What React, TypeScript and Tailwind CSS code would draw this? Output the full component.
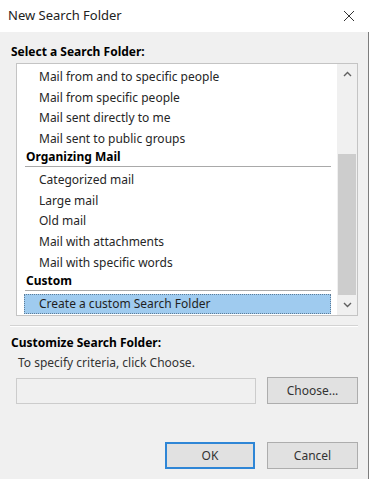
import React from 'react';

type Row = { kind: 'item' | 'header'; label: string; selected?: boolean };

const rows: Row[] = [
  { kind: 'item', label: 'Mail from and to specific people' },
  { kind: 'item', label: 'Mail from specific people' },
  { kind: 'item', label: 'Mail sent directly to me' },
  { kind: 'item', label: 'Mail sent to public groups' },
  { kind: 'header', label: 'Organizing Mail' },
  { kind: 'item', label: 'Categorized mail' },
  { kind: 'item', label: 'Large mail' },
  { kind: 'item', label: 'Old mail' },
  { kind: 'item', label: 'Mail with attachments' },
  { kind: 'item', label: 'Mail with specific words' },
  { kind: 'header', label: 'Custom' },
  { kind: 'item', label: 'Create a custom Search Folder', selected: true },
];

function ListRow({ row }: { row: Row }) {
  if (row.kind === 'header') {
    return (
      <div className="h-[20.6px] flex flex-col justify-end pb-[3px] ml-[8px] mr-[6px]">
        <span className="font-bold text-black leading-[16px] pl-[1px]">{row.label}</span>
        <div className="mt-[1px] h-[2px] bg-[#a9a9a9]" />
      </div>
    );
  }
  return (
    <div
      className={
        row.selected
          ? 'h-[20.6px] flex items-center ml-[7px] mr-[6px] pl-[14px] bg-[#9fcbef] border border-dotted border-[#5d7c98] text-[#1f1f1f]'
          : 'h-[20.6px] flex items-center ml-[7px] mr-[6px] pl-[15px] text-[#262626]'
      }
    >
      {row.label}
    </div>
  );
}

export default function App() {
  return (
    <div
      className="w-[370px] h-[479px] flex flex-col text-[12px] text-[#222]"
      style={{ fontFamily: '"Segoe UI", "Noto Sans", "Open Sans", sans-serif' }}
    >
      {/* title bar */}
      <div className="h-[32px] bg-white flex items-center justify-between pl-[8px] pr-[15px] shrink-0">
        <span className="text-[13px] text-[#222]">New Search Folder</span>
        <svg width="12" height="12" viewBox="0 0 12 12" className="text-[#333]">
          <path d="M1 1 L11 11 M11 1 L1 11" stroke="currentColor" strokeWidth="1" fill="none" />
        </svg>
      </div>

      <div className="flex-1 bg-[#f0f0f0] border-r border-[#7d7d7d] w-[369px] pt-[12px] pl-[11px] flex flex-col">
        <div className="font-bold text-black leading-[16px]">Select a Search Folder:</div>

        {/* list box */}
        <div className="mt-[3px] ml-[5px] w-[342px] h-[253px] border border-[#c4c4c4] bg-white flex">
          <div className="flex-1 pt-[3px] overflow-hidden">
            {rows.map((r) => (
              <ListRow key={r.label} row={r} />
            ))}
          </div>
          <div className="w-[20px] bg-[#f0f0f0] flex flex-col">
            <div className="h-[20px] flex items-center justify-center text-[#606060]">
              <svg width="9" height="6" viewBox="0 0 9 6">
                <path d="M1 5 L4.5 1.5 L8 5" stroke="currentColor" strokeWidth="1.4" fill="none" />
              </svg>
            </div>
            <div className="h-[70px]" />
            <div className="flex-1 mx-[1px] bg-[#cdcdcd]" />
            <div className="h-[20px] flex items-center justify-center text-[#606060]">
              <svg width="9" height="6" viewBox="0 0 9 6">
                <path d="M1 1 L4.5 4.5 L8 1" stroke="currentColor" strokeWidth="1.4" fill="none" />
              </svg>
            </div>
          </div>
        </div>

        {/* etched separator */}
        <div className="mt-[9px] ml-[-1px] w-[348px] h-px bg-[#d3d3d3] border-b border-white box-content" />

        <div className="mt-[8px] font-bold text-black leading-[16px]">Customize Search Folder:</div>
        <div className="mt-[4px] pl-[7px] leading-[16px] text-[#333]">To specify criteria, click Choose.</div>

        <div className="mt-[6px] ml-[5px] flex gap-[11px] items-center">
          <div className="w-[240px] h-[26px] border border-[#cccccc] bg-[#f0f0f0]" />
          <button className="w-[91px] h-[27px] border border-[#adadad] bg-[#e1e1e1] text-[#333]">Choose...</button>
        </div>

        <div className="mt-[38px] flex justify-end gap-[12px] pr-[10px]">
          <button className="w-[90px] h-[27px] border-2 border-[#2f86d6] bg-[#e1e1e1] text-[#333]">OK</button>
          <button className="w-[91px] h-[27px] border border-[#adadad] bg-[#e1e1e1] text-[#333]">Cancel</button>
        </div>
      </div>
    </div>
  );
}
